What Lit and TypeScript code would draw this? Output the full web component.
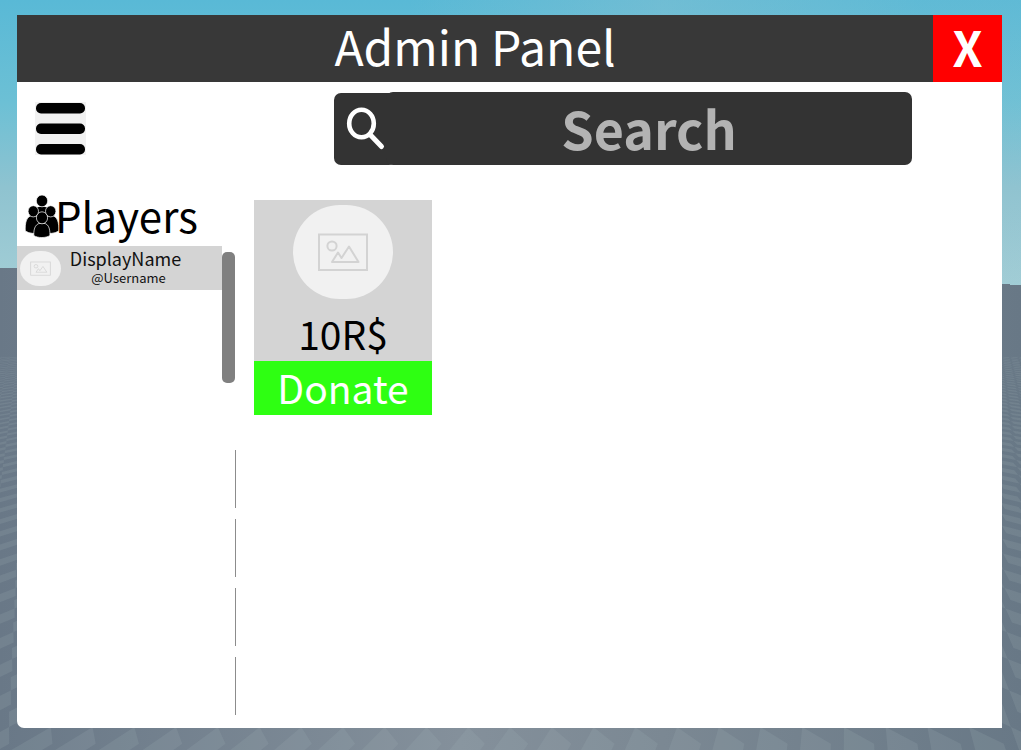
import { LitElement, html, css, svg } from "lit";
import { customElement, state } from "lit/decorators.js";

interface Player {
  displayName: string;
  username: string;
}

interface Donation {
  price: string;
}

const HORIZON = 268;
const FOCAL = 480;
const EYE = 11;

const project = (x: number, z: number) =>
  `${(510 + (FOCAL * x) / z).toFixed(1)} ${(HORIZON + (FOCAL * EYE) / z).toFixed(1)}`;

// Diamond floor tiles laid out in perspective up to the horizon.
function floorTiles(): string {
  let d = "";
  for (let z = 9; z < 60; z++) {
    const reach = Math.ceil((530 * z) / FOCAL);
    for (let x = -reach; x <= reach; x++) {
      d += `M${project(x, z - 0.5)}L${project(x + 0.42, z + 0.1)}L${project(x, z + 0.5)}L${project(x - 0.42, z - 0.1)}Z`;
    }
  }
  return d;
}

const TILES = floorTiles();

const pictureIcon = (cls: string) => html`
  <svg class=${cls} viewBox="0 0 100 94" preserveAspectRatio="none" aria-hidden="true">
    <rect width="100" height="94" rx="47" ry="47" fill="#f1f1f1"></rect>
    <g fill="none" stroke="#d3d3d3" stroke-width="2">
      <rect x="26" y="29.5" width="48" height="35.5"></rect>
      <circle cx="39" cy="41" r="4.6"></circle>
      <path d="M39 57 45 47.500 48.500 53 56 41.500 65.500 57Z" stroke-linejoin="round"></path>
    </g>
  </svg>
`;

@customElement("world-backdrop")
export class WorldBackdrop extends LitElement {
  static styles = css`
    :host {
      display: block;
    }
    .scene {
      display: block;
      width: 100%;
      height: 100%;
    }
  `;

  render() {
    return html`
      <svg class="scene" viewBox="0 0 1021 750" preserveAspectRatio="none" aria-hidden="true">
        <defs>
          <linearGradient id="sky" x1="0" y1="0" x2="0" y2="1">
            <stop offset="0" stop-color="#59b9d6"></stop>
            <stop offset="0.35" stop-color="#6cc0d5"></stop>
            <stop offset="0.65" stop-color="#8fc3d0"></stop>
            <stop offset="1" stop-color="#a3ced6"></stop>
          </linearGradient>
          <linearGradient id="floor" x1="0" y1="0" x2="1" y2="0">
            <stop offset="0" stop-color="#697887"></stop>
            <stop offset="0.45" stop-color="#84909b"></stop>
            <stop offset="0.65" stop-color="#7b8893"></stop>
            <stop offset="1" stop-color="#687886"></stop>
          </linearGradient>
          <linearGradient id="cloud" x1="0" y1="0" x2="1" y2="0">
            <stop offset="0.4" stop-color="#9ac4d0" stop-opacity="0"></stop>
            <stop offset="0.65" stop-color="#9ac4d0" stop-opacity="0.35"></stop>
            <stop offset="0.9" stop-color="#9ac4d0" stop-opacity="0.1"></stop>
          </linearGradient>
        </defs>
        <rect width="1021" height="290" fill="url(#sky)"></rect>
        <rect width="1021" height="290" fill="url(#cloud)"></rect>
        <path d="M0 268H510L1002 275V284H1010V285H1021V750H0Z" fill="url(#floor)"></path>
        ${svg`<path d=${TILES} fill="#a3b1b9" fill-opacity="0.18"></path>`}
      </svg>
    `;
  }
}

@customElement("player-row")
export class PlayerRow extends LitElement {
  static properties = { player: { attribute: false } };

  declare player: Player;

  static styles = css`
    :host {
      display: grid;
      grid-template-columns: 41px 1fr;
      align-items: center;
      height: 44px;
      padding: 0 32px 0 3px;
      background: #d4d4d4;
      color: #111;
    }
    .avatar {
      width: 41px;
      height: 35px;
    }
    .names {
      display: grid;
      justify-items: center;
      padding-bottom: 2px;
    }
    .display {
      font-size: 18px;
      line-height: 22px;
    }
    .user {
      font-size: 13px;
      line-height: 18px;
      padding-left: 6px;
    }
  `;

  render() {
    return html`
      ${pictureIcon("avatar")}
      <div class="names">
        <span class="display">${this.player.displayName}</span>
        <span class="user">@${this.player.username}</span>
      </div>
    `;
  }
}

@customElement("donation-card")
export class DonationCard extends LitElement {
  static properties = { item: { attribute: false } };

  declare item: Donation;

  static styles = css`
    :host {
      display: grid;
      grid-template-rows: 161px 54px;
      background: #d4d4d4;
    }
    .info {
      display: grid;
      grid-template-rows: 94px 1fr;
      justify-items: center;
      padding-top: 5px;
    }
    .picture {
      width: 100px;
      height: 94px;
    }
    .price {
      font-size: 39px;
      line-height: 56px;
      padding-top: 6px;
    }
    .donate {
      border: 0;
      padding: 0 0 2px;
      background: #2eff12;
      color: #fff;
      font: inherit;
      font-size: 39px;
      line-height: 50px;
      cursor: pointer;
    }
  `;

  render() {
    return html`
      <div class="info">
        ${pictureIcon("picture")}
        <span class="price">${this.item.price}</span>
      </div>
      <button class="donate" type="button">Donate</button>
    `;
  }
}

@customElement("app-root")
export class AppRoot extends LitElement {
  @state() private players: Player[] = [{ displayName: "DisplayName", username: "Username" }];
  @state() private donations: Donation[] = [{ price: "10R$" }];

  static styles = css`
    :host {
      display: grid;
      position: relative;
      box-sizing: border-box;
      min-height: 100vh;
      padding: 15px 19px 22px 17px;
      font-family: "Noto Sans CJK SC", "Noto Sans", sans-serif;
      color: #000;
    }
    .backdrop {
      position: absolute;
      inset: 0;
    }
    .panel {
      position: relative;
      display: grid;
      grid-template-rows: 67px 108px 1fr;
      background: #fff;
      border-radius: 0 0 0 7px;
    }
    .titlebar {
      display: grid;
      grid-template-columns: 1fr 69px;
      background: #383838;
    }
    .title {
      margin: 0;
      padding-bottom: 7px;
      text-align: center;
      color: #fff;
      font-size: 48px;
      font-weight: 400;
      line-height: 60px;
    }
    .close {
      border: 0;
      padding: 0 0 5px;
      background: #f00;
      color: #fff;
      font: inherit;
      font-size: 48px;
      font-weight: 700;
      line-height: 60px;
      cursor: pointer;
    }
    .toolbar {
      display: grid;
      grid-template-columns: 317px 1fr;
      align-items: start;
      padding: 10px 90px 0 0;
    }
    .menu {
      justify-self: start;
      margin: 10px 0 0 18px;
      border: 0;
      padding: 0;
      background: #f1f1f1;
      line-height: 0;
      cursor: pointer;
    }
    .menu-icon {
      width: 51px;
      height: 53px;
    }
    .search {
      display: grid;
      grid-template-columns: 52px 1fr;
      align-items: end;
    }
    .search-label {
      display: grid;
      place-items: center;
      width: 62px;
      height: 72px;
      box-sizing: border-box;
      background: #333;
      border-radius: 7px;
    }
    .search-icon {
      width: 62px;
      height: 72px;
    }
    .search-input {
      min-width: 0;
      width: 100%;
      height: 73px;
      box-sizing: border-box;
      border: 0;
      border-radius: 7px;
      padding: 0 0 3px;
      outline: 0;
      background: #333;
      color: #fff;
      font: inherit;
      font-size: 52px;
      font-weight: 700;
      text-align: center;
    }
    .search-input::placeholder {
      color: #b3b3b3;
      opacity: 1;
    }
    .body {
      display: grid;
      grid-template-columns: 219px 1fr;
    }
    .sidebar {
      display: grid;
      grid-template-columns: 205px 14px;
      grid-template-rows: 56px 1fr;
    }
    .heading {
      grid-column: 1 / 3;
      display: flex;
      align-items: start;
      margin: 0;
      padding: 0 0 0 8px;
      font-size: 42px;
      font-weight: 400;
      line-height: 50px;
    }
    .people {
      flex: none;
      width: 34px;
      height: 43px;
      margin: 5px -4px 0 0;
    }
    .list {
      margin: 0;
      padding: 0;
      list-style: none;
    }
    .rail {
      display: flex;
      flex-direction: column;
      gap: 11px;
      padding: 6px 0 13px;
    }
    .thumb {
      width: 13px;
      height: 131px;
      margin-bottom: auto;
      border-radius: 5px;
      background: #808080;
    }
    .mark {
      align-self: end;
      width: 1px;
      height: 58px;
      background: #8c8c8c;
    }
    .cards {
      display: grid;
      grid-template-columns: repeat(auto-fill, 178px);
      align-content: start;
      gap: 18px;
      padding: 10px 18px;
    }
  `;

  render() {
    return html`
      <world-backdrop class="backdrop"></world-backdrop>
      <main class="panel">
        <header class="titlebar">
          <h1 class="title">Admin Panel</h1>
          <button class="close" type="button" aria-label="Close">X</button>
        </header>
        <div class="toolbar">
          <button class="menu" type="button" aria-label="Menu">
            <svg class="menu-icon" viewBox="0 0 51 53" aria-hidden="true">
              <rect x="1" y="1" width="49" height="10.500" rx="5"></rect>
              <rect x="1" y="21.500" width="49" height="10.500" rx="5"></rect>
              <rect x="1" y="42" width="49" height="10.500" rx="5"></rect>
            </svg>
          </button>
          <div class="search">
            <label class="search-label" for="search" aria-label="Search">
              <svg class="search-icon" viewBox="0 0 62 72" fill="none" stroke="#fff" aria-hidden="true">
                <ellipse cx="27.500" cy="30.500" rx="12.300" ry="13.800" stroke-width="4.600"></ellipse>
                <path d="M36 41.500 47.500 53.500" stroke-width="5" stroke-linecap="round"></path>
              </svg>
            </label>
            <input id="search" class="search-input" type="text" placeholder="Search" autocomplete="off" />
          </div>
        </div>
        <div class="body">
          <aside class="sidebar">
            <h2 class="heading">
              <svg class="people" viewBox="0 0 34 43" aria-hidden="true">
                <path d="M9.500 18C10 13.500 12.500 11.500 17 11.500S24 13.500 24.500 18V24H9.500Z"></path>
                <g stroke="#fff" stroke-width="0.700">
                  <ellipse cx="17" cy="5.900" rx="5.700" ry="5.900"></ellipse>
                  <path d="M.3 36C-.2 28 1.500 20.500 8 20.500S15 28 15 38C10 39 4 38.500.3 36Z"></path>
                  <path d="M33.700 36C34.200 28 32.500 20.500 26 20.500S19 28 19 38C24 39 30 38.500 33.700 36Z"></path>
                  <ellipse cx="8.300" cy="16.300" rx="5.200" ry="5.600"></ellipse>
                  <ellipse cx="25.700" cy="16.300" rx="5.200" ry="5.600"></ellipse>
                  <path d="M8.800 40.500C8.500 32.500 11 28 17 28S25.200 32.500 24.900 40.500C21 43.200 12.500 43.200 8.800 40.500Z"></path>
                  <ellipse cx="17" cy="22.800" rx="5.600" ry="6"></ellipse>
                </g>
              </svg>
              <span>Players</span>
            </h2>
            <ul class="list">
              ${this.players.map((p) => html`<li><player-row .player=${p}></player-row></li>`)}
            </ul>
            <div class="rail">
              <div class="thumb"></div>
              ${[0, 1, 2, 3].map(() => html`<div class="mark"></div>`)}
            </div>
          </aside>
          <section class="cards">
            ${this.donations.map((d) => html`<donation-card .item=${d}></donation-card>`)}
          </section>
        </div>
      </main>
    `;
  }
}
